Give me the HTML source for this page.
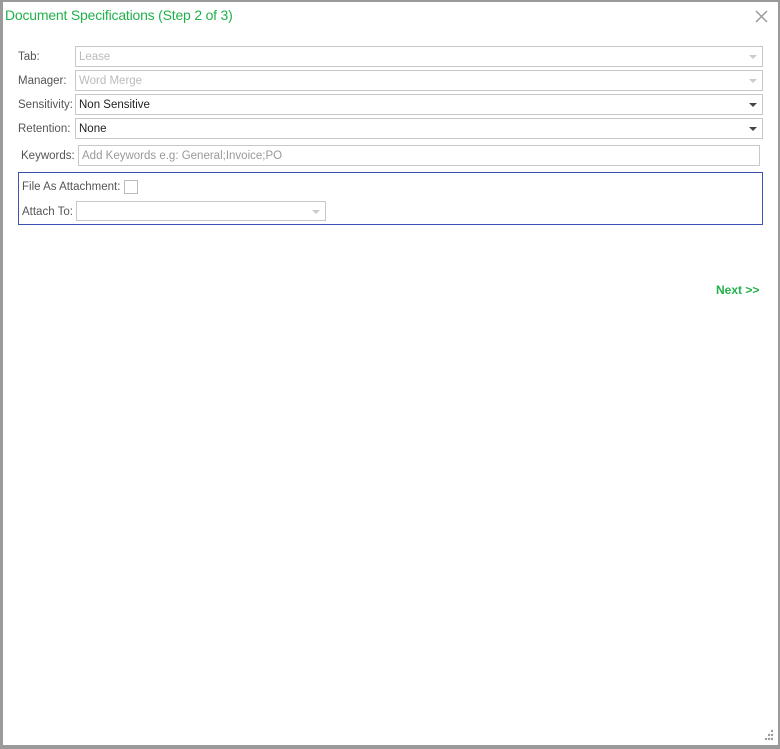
<!DOCTYPE html>
<html><head><style>
body{margin:0;width:780px;height:749px;background:#9a9a9a;font-family:"Liberation Sans",sans-serif;position:relative;overflow:hidden}
.win{position:absolute;left:3px;top:2px;width:775px;height:743px;background:#fff}
.a{position:absolute}
.t{font-size:14px;color:#21b14b;letter-spacing:-0.2px}
.l{font-size:11.5px;color:#555}
.s{position:absolute;border:1px solid #c8c8c8;background:#fff;box-sizing:border-box;font-size:11.5px;padding:4px 3px 0}
.s i{position:absolute;right:5px;top:8px;border-left:4px solid transparent;border-right:4px solid transparent;border-top:4px solid #444}
.s.d{color:#bbb}.s.d i{border-top-color:#ccc}
</style></head><body>
<div class="win"></div>
<div class="a t" style="left:5px;top:7px">Document Specifications (Step 2 of 3)</div>
<svg class="a" style="left:755px;top:10px" width="13" height="13"><path d="M1 1L12 12M12 1L1 12" stroke="#999" stroke-width="1.5"/></svg>
<div class="a l" style="left:18px;top:51px">Tab:</div>
<div class="s d" style="left:75px;top:46px;width:688px;height:21px">Lease<i></i></div>
<div class="a l" style="left:18px;top:75px">Manager:</div>
<div class="s d" style="left:75px;top:70px;width:688px;height:21px">Word Merge<i></i></div>
<div class="a l" style="left:18px;top:99px">Sensitivity:</div>
<div class="s" style="left:75px;top:94px;width:688px;height:21px;color:#222">Non Sensitive<i></i></div>
<div class="a l" style="left:18px;top:123px">Retention:</div>
<div class="s" style="left:75px;top:118px;width:688px;height:21px;color:#222">None<i></i></div>
<div class="a l" style="left:21px;top:150px">Keywords:</div>
<div class="s" style="left:78px;top:145px;width:682px;height:21px;color:#999">Add Keywords e.g: General;Invoice;PO</div>
<div class="a" style="left:18px;top:172px;width:745px;height:53px;border:1px solid #3b52b0;box-sizing:border-box"></div>
<div class="a l" style="left:22px;top:181px">File As Attachment:</div>
<div class="a" style="left:124px;top:180px;width:14px;height:14px;border:1px solid #bbb;box-sizing:border-box"></div>
<div class="a l" style="left:22px;top:206px">Attach To:</div>
<div class="s d" style="left:76px;top:201px;width:250px;height:20px"><i></i></div>
<div class="a" style="left:716px;top:283px;font-size:12px;font-weight:bold;color:#21b14b">Next &gt;&gt;</div>
<svg class="a" style="left:762px;top:729px" width="14" height="14" fill="#999"><circle cx="10" cy="2" r="1.2"/><circle cx="7" cy="6" r="1.2"/><circle cx="10" cy="6" r="1.2"/><circle cx="4" cy="10" r="1.2"/><circle cx="7" cy="10" r="1.2"/><circle cx="10" cy="10" r="1.2"/></svg>
</body></html>
